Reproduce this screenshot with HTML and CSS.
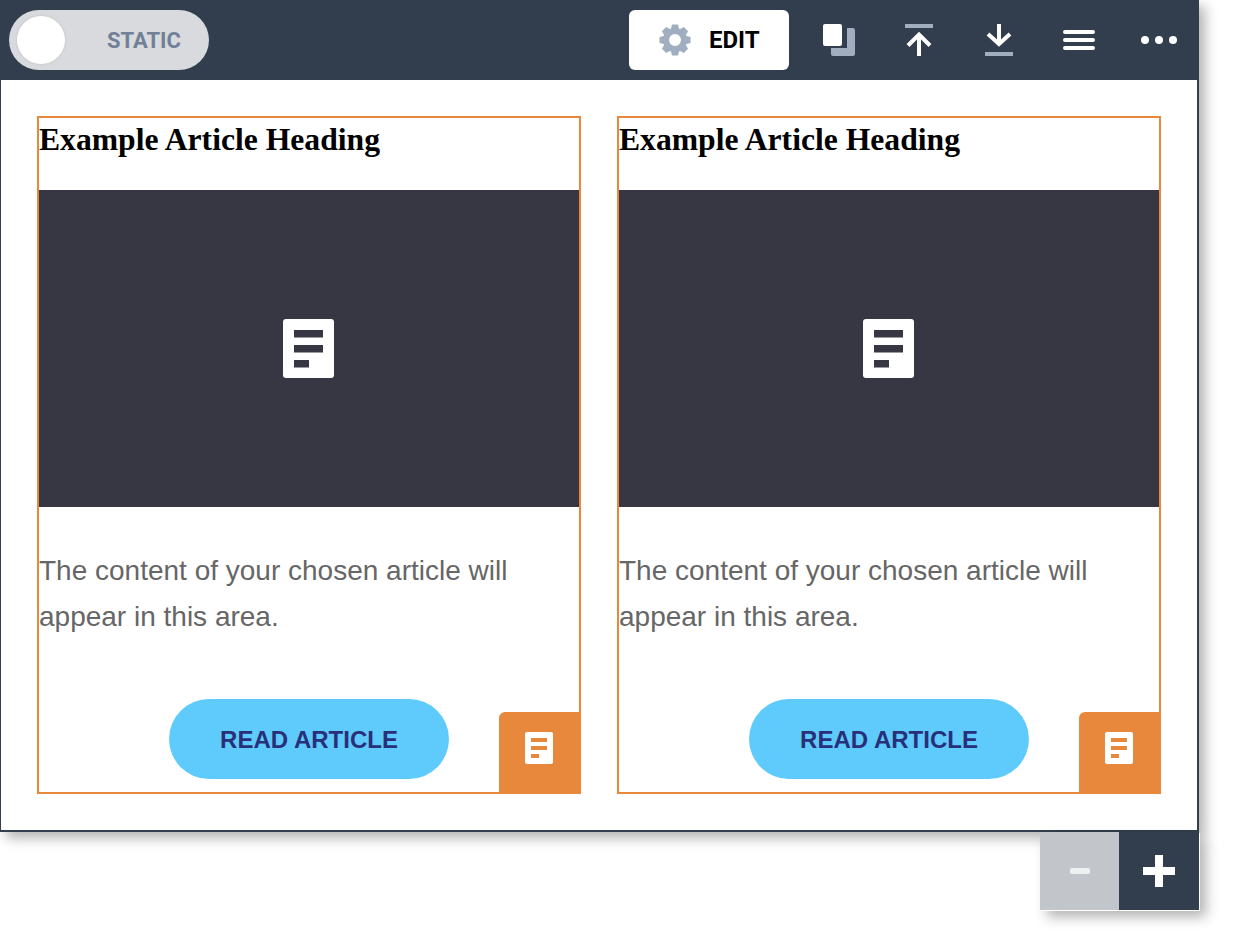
FILE: index.html
```html
<!DOCTYPE html>
<html lang="en">
<head>
<meta charset="utf-8">
<title>Article block</title>
<link rel="stylesheet" href="styles.css">
</head>
<body>
<div class="stage">
  <section class="frame">
    <header class="toolbar">
      <div class="toggle">
        <span class="knob"></span>
        <span class="toggle-label">STATIC</span>
      </div>
      <div class="tools">
        <button class="edit">
          <svg class="gear" width="32" height="32" viewBox="0 0 32 32">
            <g fill="#a0aec0">
              <path d="M13 .5h6l1.500 6h-9z"/>
              <path d="M13 .5h6l1.500 6h-9z" transform="rotate(45 16 16)"/>
              <path d="M13 .5h6l1.500 6h-9z" transform="rotate(90 16 16)"/>
              <path d="M13 .5h6l1.500 6h-9z" transform="rotate(135 16 16)"/>
              <path d="M13 .5h6l1.500 6h-9z" transform="rotate(180 16 16)"/>
              <path d="M13 .5h6l1.500 6h-9z" transform="rotate(225 16 16)"/>
              <path d="M13 .5h6l1.500 6h-9z" transform="rotate(270 16 16)"/>
              <path d="M13 .5h6l1.500 6h-9z" transform="rotate(315 16 16)"/>
            </g>
            <circle cx="16" cy="16" r="9" fill="none" stroke="#a0aec0" stroke-width="6"/>
          </svg>
          <span>EDIT</span>
        </button>
        <span class="tool">
          <svg width="32" height="32" viewBox="0 0 32 32"><path fill="#a0aec0" d="M24 4h6a2 2 0 0 1 2 2v24a2 2 0 0 1-2 2H10a2 2 0 0 1-2-2v-6h16z"/><rect width="19" height="22" rx="2" fill="#fff"/></svg>
        </span>
        <span class="tool">
          <svg width="28" height="32" viewBox="0 0 28 32"><rect width="28" height="4" fill="#a0aec0"/><path d="M14 32V10.500M3 21.500 14 10.500l11 11" fill="none" stroke="#fff" stroke-width="4"/></svg>
        </span>
        <span class="tool">
          <svg width="28" height="32" viewBox="0 0 28 32"><rect y="28" width="28" height="4" fill="#a0aec0"/><path d="M14 0v20M3 10l11 10 11-10" fill="none" stroke="#fff" stroke-width="4"/></svg>
        </span>
        <span class="tool">
          <svg width="32" height="20" viewBox="0 0 32 20"><rect width="32" height="4" rx="2" fill="#fff"/><rect y="8" width="32" height="4" rx="2" fill="#fff"/><rect y="16" width="32" height="4" rx="2" fill="#fff"/></svg>
        </span>
        <span class="tool">
          <svg width="36" height="8" viewBox="0 0 36 8"><circle cx="4" cy="4" r="4" fill="#fff"/><circle cx="18" cy="4" r="4" fill="#fff"/><circle cx="32" cy="4" r="4" fill="#fff"/></svg>
        </span>
      </div>
    </header>
    <div class="cards">
      <article class="card">
        <h2 class="heading">Example Article Heading</h2>
        <div class="media">
          <svg class="media-icon" width="51" height="59" viewBox="0 0 51 59"><rect width="51" height="59" rx="3" fill="#fff"/><rect x="11" y="11" width="29" height="7.500" fill="#373643"/><rect x="11" y="26" width="29" height="7.500" fill="#373643"/><rect x="11" y="41" width="15" height="7.500" fill="#373643"/></svg>
        </div>
        <p class="copy">The content of your chosen article will appear in this area.</p>
        <a class="read">READ ARTICLE</a>
        <span class="badge">
          <svg width="28" height="32" viewBox="0 0 28 32"><rect width="28" height="32" rx="2" fill="#fff"/><rect x="6" y="6" width="16" height="4" fill="#e8883c"/><rect x="6" y="14" width="16" height="4" fill="#e8883c"/><rect x="6" y="22" width="8" height="4" fill="#e8883c"/></svg>
        </span>
      </article>
      <article class="card">
        <h2 class="heading">Example Article Heading</h2>
        <div class="media">
          <svg class="media-icon" width="51" height="59" viewBox="0 0 51 59"><rect width="51" height="59" rx="3" fill="#fff"/><rect x="11" y="11" width="29" height="7.500" fill="#373643"/><rect x="11" y="26" width="29" height="7.500" fill="#373643"/><rect x="11" y="41" width="15" height="7.500" fill="#373643"/></svg>
        </div>
        <p class="copy">The content of your chosen article will appear in this area.</p>
        <a class="read">READ ARTICLE</a>
        <span class="badge">
          <svg width="28" height="32" viewBox="0 0 28 32"><rect width="28" height="32" rx="2" fill="#fff"/><rect x="6" y="6" width="16" height="4" fill="#e8883c"/><rect x="6" y="14" width="16" height="4" fill="#e8883c"/><rect x="6" y="22" width="8" height="4" fill="#e8883c"/></svg>
        </span>
      </article>
    </div>
  </section>
  <div class="zoom">
    <span class="zoom-btn minus"><span class="minus-bar"></span></span>
    <span class="zoom-btn plus">
      <svg width="32" height="32" viewBox="0 0 32 32"><path fill="#fff" d="M12 0h8v12h12v8H20v12h-8V20H0v-8h12z"/></svg>
    </span>
  </div>
</div>
</body>
</html>
```
FILE: styles.css
```css
* { box-sizing: border-box; }
html, body { margin: 0; padding: 0; background: #fff; }
body { height: 948px; overflow: hidden; }
.stage { width: 1199px; display: flex; flex-direction: column; align-items: flex-end; }
.frame {
  width: 1199px;
  height: 832px;
  background: #fff;
  border-left: 1px solid #323e4d;
  border-right: 2px solid #323e4d;
  border-bottom: 2px solid #323e4d;
  box-shadow: 6px 6px 12px rgba(0, 0, 0, .3);
}
.toolbar {
  height: 80px;
  margin: 0 -2px 0 -1px;
  padding: 10px 0 10px 9px;
  background: #323e4d;
  display: flex;
  justify-content: space-between;
}
.toggle {
  width: 200px;
  height: 60px;
  border-radius: 30px;
  background: #d8dadd;
  display: flex;
  align-items: center;
  padding-left: 8px;
}
.knob {
  width: 48px;
  height: 48px;
  border-radius: 50%;
  background: #fff;
  box-shadow: 0 0 3px rgba(0, 0, 0, .12);
}
.toggle-label {
  margin: 2px 0 0 42px;
  font: 700 22px/1 Roboto, sans-serif;
  color: #718096;
}
.tools { display: flex; align-items: center; }
.edit {
  width: 160px;
  height: 60px;
  margin-right: 10px;
  border: 0;
  border-radius: 6px;
  background: #fff;
  padding: 0 0 0 30px;
  display: flex;
  align-items: center;
  gap: 18px;
  font: 700 24px/1 Roboto, sans-serif;
  color: #000;
}
.tool { width: 80px; height: 60px; display: flex; align-items: center; justify-content: center; }
.cards { display: flex; gap: 36px; padding: 36px; }
.card {
  position: relative;
  width: 544px;
  height: 678px;
  border: 2px solid #e8883c;
  display: flex;
  flex-direction: column;
}
.heading {
  margin: 0;
  height: 72px;
  padding: 2px 0 0;
  font: 700 31.650px/40px "Liberation Serif", serif;
  color: #000;
}
.media {
  height: 317px;
  background: #373643;
  display: flex;
  align-items: center;
  justify-content: center;
}
.media-icon { margin-right: 1px; }
.copy {
  margin: 41px 0 0;
  font: 400 28px/46px "Liberation Sans", Arial, sans-serif;
  color: #666;
}
.read {
  position: absolute;
  left: 130px;
  bottom: 13px;
  width: 280px;
  height: 80px;
  padding-top: 2px;
  border-radius: 40px;
  background: #5ecbfc;
  display: flex;
  align-items: center;
  justify-content: center;
  font: 700 24px/1 "Liberation Sans", Arial, sans-serif;
  color: #29307a;
}
.badge {
  position: absolute;
  right: -2px;
  bottom: -2px;
  width: 82px;
  height: 82px;
  border-top-left-radius: 6px;
  background: #e8883c;
  display: flex;
  justify-content: center;
  padding: 20px 2px 0 0;
}
.zoom { display: flex; box-shadow: 1px 1px 0 #fff, 7px 7px 12px rgba(0, 0, 0, .3); }
.zoom-btn { height: 78px; display: flex; align-items: center; justify-content: center; }
.minus { width: 79px; background: #c2c6cb; }
.minus-bar { width: 20px; height: 6px; border-radius: 2px; background: #eef0f1; }
.plus { width: 80px; background: #323e4d; }
```
